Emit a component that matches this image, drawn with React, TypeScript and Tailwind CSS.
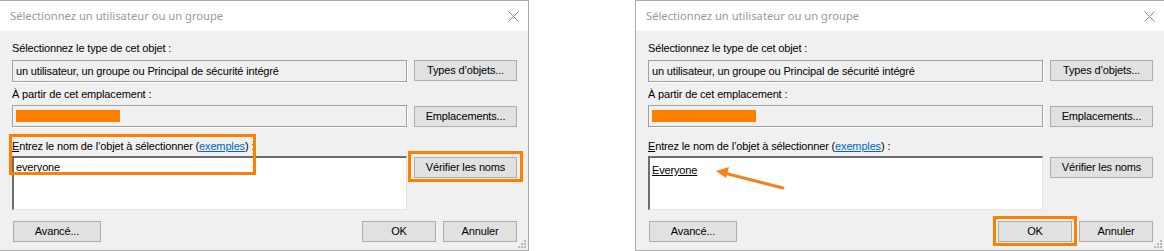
import React from 'react'

const Btn: React.FC<{ label: React.ReactNode; w?: string; className?: string }> = ({
  label,
  w = 'w-[103px]',
  className = '',
}) => (
  <div
    className={`h-[21px] ${w} shrink-0 flex items-center justify-center bg-[#e1e1e1] border border-[#adadad] text-[11px] text-black leading-none ${className}`}
  >
    {label}
  </div>
)

const ReadField: React.FC<{ children?: React.ReactNode }> = ({ children }) => (
  <div className="h-[22px] flex-1 flex items-center px-[3px] bg-[#f0f0f0] border border-[#a0a0a0] shadow-[1px_1px_0_#ffffff] text-[11px] text-black whitespace-nowrap">
    {children}
  </div>
)

const Grip = () => (
  <svg width="10" height="10" viewBox="0 0 10 10" className="absolute right-[1px] bottom-[1px]">
    {[
      [7, 1],
      [4, 4],
      [7, 4],
      [1, 7],
      [4, 7],
      [7, 7],
    ].map(([x, y], i) => (
      <rect key={i} x={x} y={y} width="2" height="2" fill="#b8b8b8" />
    ))}
  </svg>
)

interface DialogProps {
  value: React.ReactNode
  className?: string
  children?: React.ReactNode
}

const Dialog: React.FC<DialogProps> = ({ value, className = '', children }) => (
  <div
    className={`relative w-[530px] h-[251px] shrink-0 border border-[#aaaaaa] bg-[#f0f0f0] flex flex-col ${className}`}
    style={{ fontFamily: '"Liberation Sans", Arial, sans-serif' }}
  >
    {/* title bar */}
    <div className="h-[30px] bg-white flex items-center justify-between pl-[10px] pr-[9px]">
      <span
        className="text-[11.2px] text-[#999999]"
        style={{ fontFamily: '"Noto Sans", "Open Sans", sans-serif' }}
      >
        Sélectionnez un utilisateur ou un groupe
      </span>
      <svg width="11" height="11" viewBox="0 0 11 11">
        <path d="M0.5 0.5 L10.5 10.5 M10.5 0.5 L0.5 10.5" stroke="#8a8a8a" strokeWidth="1" />
      </svg>
    </div>

    <div className="flex flex-col pl-[12px] pr-[11px] text-[11px] tracking-[-0.15px] text-black leading-[13px]">
      <div className="mt-[11px]">Sélectionnez le type de cet objet :</div>
      <div className="mt-[5px] flex items-start gap-[7px]">
        <ReadField>un utilisateur, un groupe ou Principal de sécurité intégré</ReadField>
        <Btn label="Types d’objets..." />
      </div>

      <div className="mt-[6px]">À partir de cet emplacement :</div>
      <div className="mt-[4px] flex items-start gap-[7px]">
        <ReadField>
          <div className="h-[12px] w-[104px] bg-[#ff8000]" />
        </ReadField>
        <Btn label="Emplacements..." className="mt-[1px]" />
      </div>

      <div className="mt-[13px]">
        <span className="underline">E</span>ntrez le nom de l’objet à sélectionner (
        <span className="text-[#0066cc] underline">exemples</span>) :
      </div>
      <div className="mt-[3px] flex items-start gap-[7px]">
        <div className="h-[54px] flex-1 bg-white border-t-2 border-l-2 border-t-[#6d6d6d] border-l-[#6d6d6d] border-r border-b border-r-[#e3e3e3] border-b-[#e3e3e3] px-[2px] pt-[3px]">
          {value}
        </div>
        <Btn label="Vérifier les noms" className="mt-[1px]" />
      </div>

      <div className="mt-[11px] flex items-start">
        <Btn label="Avancé..." w="w-[88px]" className="ml-[1px]" />
        <div className="flex-1" />
        <Btn label="OK" w="w-[74px]" />
        <Btn label="Annuler" w="w-[74px]" className="ml-[7px]" />
      </div>
    </div>

    <Grip />
    {children}
  </div>
)

export default function App() {
  return (
    <div className="w-[1164px] h-[251px] bg-white overflow-hidden flex">
      <Dialog value={<span>everyone</span>} className="ml-[-1px]">
        {/* annotation boxes */}
        <div className="absolute left-[9px] top-[133px] w-[247px] h-[41px] border-[3px] border-[#ff8000]" />
        <div className="absolute left-[408px] top-[150px] w-[115px] h-[31px] border-[3px] border-[#ff8000]" />
      </Dialog>

      <Dialog value={<span className="underline pt-[3px] inline-block">Everyone</span>} className="ml-[106px]">
        <div className="absolute left-[357px] top-[215px] w-[84px] h-[30px] border-[3px] border-[#ff8000]" />
        <svg className="absolute left-0 top-0 pointer-events-none" width="530" height="251">
          <path d="M147 187 L88 172" stroke="#f5821f" strokeWidth="3" strokeLinecap="round" />
          <path d="M80 170 L93 166 L90 177 Z" fill="#f5821f" />
        </svg>
      </Dialog>
    </div>
  )
}
